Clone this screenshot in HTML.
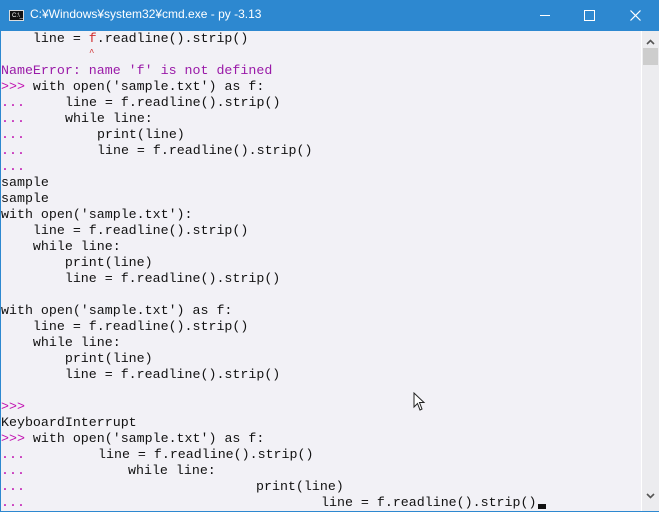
<!DOCTYPE html>
<html><head><meta charset="utf-8"><style>
html,body{margin:0;padding:0;}
body{width:659px;height:512px;position:relative;overflow:hidden;background:#f2f1f6;font-family:"Liberation Mono","Noto Sans CJK JP",monospace;}
.tb{position:absolute;left:0;top:0;width:659px;height:31px;background:#2d88d0;}
.tb .t{position:absolute;left:30px;top:7px;color:#fff;font:12px "Liberation Sans","Noto Sans CJK JP",sans-serif;}
.ic{position:absolute;left:9px;top:10px;width:15px;height:11px;background:#111;border:1px solid #ddd;box-sizing:border-box;}
.ic span{position:absolute;left:2px;top:2px;color:#fff;font:6px "Liberation Sans",sans-serif;line-height:6px;}
.row{position:absolute;left:1px;height:16px;line-height:16px;font-size:13.3px;color:#111;white-space:pre;}
.m{color:#c010b0;}
.p{color:#9a1aa8;}
.sb{position:absolute;left:641px;top:31px;width:17px;height:480px;background:#ececef;border-left:1px solid #fff;}
.bd{position:absolute;background:#2d88d0;}
</style></head><body>
<div class="tb">
<div class="ic"><span>C:\_</span></div>
<div class="t">C:¥Windows¥system32¥cmd.exe - py  -3.13</div>
<div style="position:absolute;left:540px;top:15px;width:10px;height:1px;background:#fff"></div>
<div style="position:absolute;left:584px;top:10px;width:9px;height:9px;border:1px solid #fff"></div>
<svg style="position:absolute;left:630px;top:10px" width="11" height="11"><path d="M0.5 0.5L10.5 10.5M10.5 0.5L0.5 10.5" stroke="#fff" stroke-width="1.2"/></svg>
</div>
<div class="bd" style="left:0;top:31px;width:1px;height:481px"></div>
<div class="bd" style="left:658px;top:31px;width:1px;height:481px"></div>
<div class="bd" style="left:0;top:511px;width:659px;height:1px"></div>
<div class="sb">
<svg style="position:absolute;left:4px;top:8px" width="9" height="6"><path d="M1 5L4.5 1.5L8 5" stroke="#555" stroke-width="1.6" fill="none"/></svg>
<div style="position:absolute;left:1px;top:17px;width:15px;height:17px;background:#cdcdcd"></div>
<svg style="position:absolute;left:4px;top:462px" width="9" height="6"><path d="M1 1L4.5 4.5L8 1" stroke="#555" stroke-width="1.6" fill="none"/></svg>
</div>

<div class="row" style="top:31px">    line = <span style="color:#d03030">f</span>.readline().strip()</div>
<div class="row" style="top:45px;left:89px;color:#d03030;font-size:9px">^</div>
<div class="row p" style="top:63px">NameError: name 'f' is not defined</div>
<div class="row" style="top:79px"><span class="m">&gt;&gt;&gt;</span> with open('sample.txt') as f:</div>
<div class="row m" style="top:95px">...</div><div class="row" style="top:95px;left:65px">line = f.readline().strip()</div>
<div class="row m" style="top:111px">...</div><div class="row" style="top:111px;left:65px">while line:</div>
<div class="row m" style="top:127px">...</div><div class="row" style="top:127px;left:97px">print(line)</div>
<div class="row m" style="top:143px">...</div><div class="row" style="top:143px;left:97px">line = f.readline().strip()</div>
<div class="row m" style="top:159px">...</div>
<div class="row" style="top:175px">sample</div>
<div class="row" style="top:191px">sample</div>
<div class="row" style="top:207px">with open('sample.txt'):</div>
<div class="row" style="top:223px">    line = f.readline().strip()</div>
<div class="row" style="top:239px">    while line:</div>
<div class="row" style="top:255px">        print(line)</div>
<div class="row" style="top:271px">        line = f.readline().strip()</div>
<div class="row" style="top:303px">with open('sample.txt') as f:</div>
<div class="row" style="top:319px">    line = f.readline().strip()</div>
<div class="row" style="top:335px">    while line:</div>
<div class="row" style="top:351px">        print(line)</div>
<div class="row" style="top:367px">        line = f.readline().strip()</div>
<div class="row m" style="top:399px">&gt;&gt;&gt;</div>
<div class="row" style="top:415px">KeyboardInterrupt</div>
<div class="row" style="top:431px"><span class="m">&gt;&gt;&gt;</span> with open('sample.txt') as f:</div>
<div class="row m" style="top:447px">...</div><div class="row" style="top:447px;left:98px">line = f.readline().strip()</div>
<div class="row m" style="top:463px">...</div><div class="row" style="top:463px;left:128px">while line:</div>
<div class="row m" style="top:479px">...</div><div class="row" style="top:479px;left:256px">print(line)</div>
<div class="row m" style="top:495px">...</div><div class="row" style="top:495px;left:321px">line = f.readline().strip()</div>
<div style="position:absolute;left:538px;top:504px;width:8px;height:5px;background:#111"></div>
<svg style="position:absolute;left:413px;top:392px" width="13" height="20"><path d="M1 1L1 15L4.5 11.5L7 18L9 17L6.5 10.5L11 10.5Z" fill="#fff" stroke="#222" stroke-width="1"/></svg>
</body></html>
